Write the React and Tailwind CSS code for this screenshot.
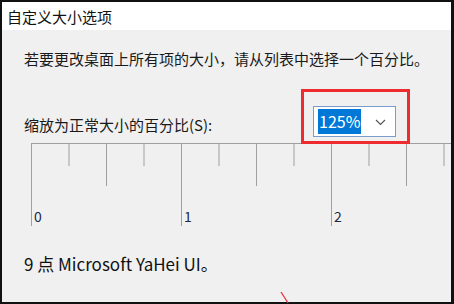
export default function App() {
  const ticks = Array.from({ length: 12 }, (_, i) => i);
  const font = { fontFamily: '"Noto Sans CJK SC", "Noto Sans", sans-serif' };

  return (
    <div
      className="relative w-[454px] h-[304px] bg-[#111] pt-[2px] pl-[2px] pr-[3px] pb-[2px] flex flex-col overflow-hidden"
      style={font}
    >
      {/* title bar */}
      <div className="h-[28px] bg-white flex items-center pl-[5px] text-[15px] text-[#111] leading-none">
        自定义大小选项
      </div>

      {/* body */}
      <div className="flex-1 bg-[#f0f0f0] flex flex-col">
        <p className="mt-[19px] pl-[22px] text-[15px] leading-[20px] text-[#1a1a1a] whitespace-nowrap">
          若要更改桌面上所有项的大小，请从列表中选择一个百分比。
        </p>

        <div className="mt-[37px] flex items-center pl-[22px]">
          <span className="w-[289px] text-[15px] leading-[20px] text-[#1a1a1a] pt-[6px]">
            缩放为正常大小的百分比(S):
          </span>
          <div className="relative w-[83px] h-[31px] bg-white border border-[#7a9cc9] flex items-center pl-[4px]">
            <span className="bg-[#0078d7] text-white text-[16px] leading-[25px] px-[1px]">125%</span>
            <svg className="absolute right-[9px] top-[12px]" width="11" height="7" viewBox="0 0 11 7">
              <path d="M1 1 L5.5 5.5 L10 1" fill="none" stroke="#555" strokeWidth="1.2" />
            </svg>
            <div className="absolute -left-[13px] -right-[15px] -top-[18px] -bottom-[8px] border-[3px] border-[#ee2b2f]" />
          </div>
        </div>

        <svg className="mt-[6px] ml-[29px]" width="420" height="85" viewBox="0 0 420 85">
          <line x1="0" y1="0.5" x2="420" y2="0.5" stroke="#a0a0a0" strokeWidth="1" />
          {ticks.map((i) => {
            const x = 0.5 + 37.5 * i;
            const len = i % 4 === 0 ? 83 : i % 2 === 0 ? 43 : 23;
            return <line key={i} x1={x} y1="0" x2={x} y2={len} stroke="#a0a0a0" strokeWidth="1" />;
          })}
          <text x="3" y="79" fontSize="14" fill="#1a2a44" style={font}>0</text>
          <text x="153" y="79" fontSize="14" fill="#1a2a44" style={font}>1</text>
          <text x="303" y="79" fontSize="14" fill="#1a2a44" style={font}>2</text>
        </svg>

        <p className="mt-[25px] pl-[22px] text-[17px] leading-[22px] text-[#111] whitespace-nowrap">
          9 点 Microsoft YaHei UI。
        </p>
      </div>

      <svg className="absolute left-[280px] top-[291px]" width="10" height="13" viewBox="0 0 10 13">
        <line x1="1" y1="1" x2="8" y2="12" stroke="#e8303a" strokeWidth="1.3" />
      </svg>
    </div>
  );
}
